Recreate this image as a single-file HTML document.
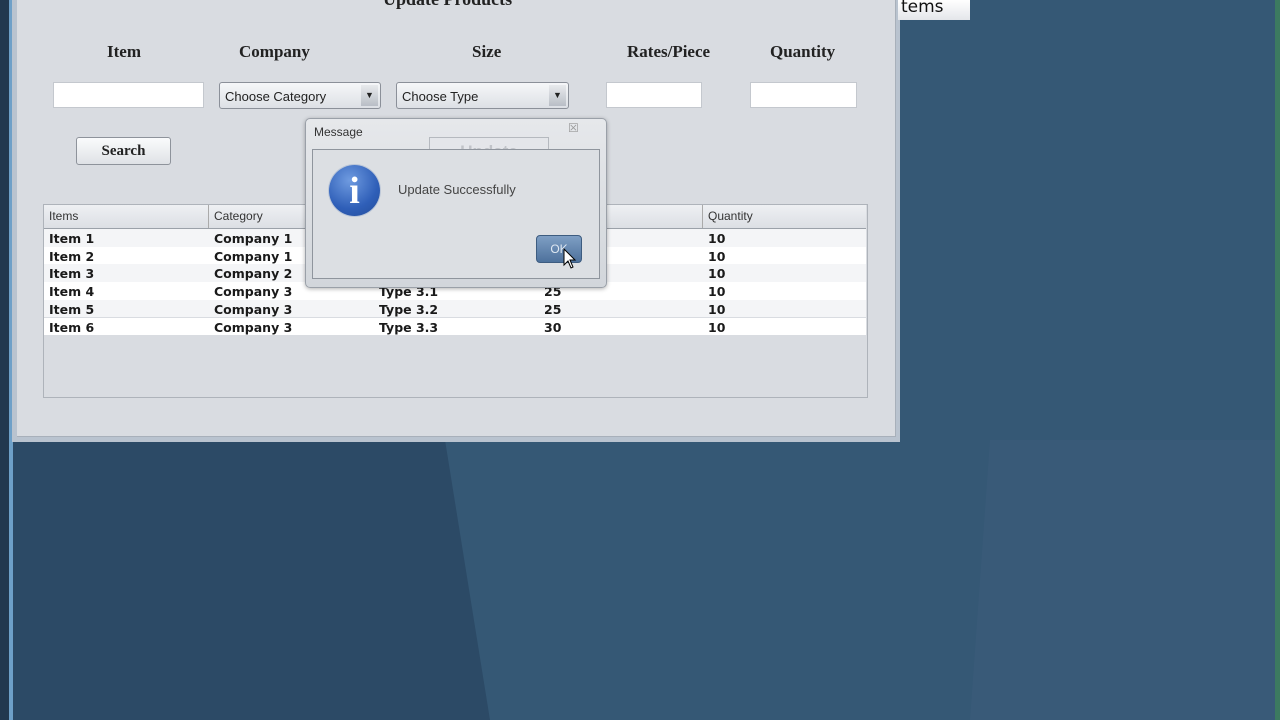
<!DOCTYPE html>
<html><head><style>
body{margin:0;width:1280px;height:720px;overflow:hidden;position:relative;font-family:"Liberation Sans",sans-serif;background:#355875}
.a{position:absolute}
.lbl{position:absolute;font-family:"Liberation Serif",serif;font-weight:bold;font-size:17px;color:#222;top:42px}
.tf{position:absolute;top:82px;height:26px;background:#fff;border:1px solid #c4c8ce;box-sizing:border-box}
.cb{position:absolute;top:82px;height:27px;border:1px solid #8b9099;border-radius:3px;background:linear-gradient(#f6f7f9,#dde0e5);box-sizing:border-box;font-size:13px;color:#222;padding:6px 5px}
.cb .ar{position:absolute;right:2px;top:2px;width:17px;height:21px;background:linear-gradient(#e8eaed,#b9bec6);font-size:9px;text-align:center;line-height:21px}
.row{position:absolute;left:44px;width:822px;height:17.7px;font-family:"DejaVu Sans",sans-serif;font-weight:bold;font-size:12.5px;color:#1a1a1a}
.row span{position:absolute;top:2px}
</style></head><body>
<svg class="a" style="left:0;top:0" width="1280" height="720">
<polygon points="0,440 445,440 490,720 0,720" fill="#2c4a66"/>
<polygon points="990,440 1280,440 1280,720 970,720" fill="#395a78"/>
<rect x="0" y="0" width="10" height="720" fill="#22384f"/>
<rect x="9" y="0" width="4" height="720" fill="#6ea0c8"/>
<rect x="1275" y="0" width="5" height="720" fill="#3c7a60"/>
</svg>
<div class="a" style="left:12px;top:0;width:888px;height:442px;background:#b9c3cf"></div>
<div class="a" style="left:17px;top:0;width:878px;height:436px;background:#d9dce1;border-right:1px solid #a8b0ba;border-bottom:1px solid #a8b0ba"></div>
<div class="a" style="left:383px;top:-11px;font-family:'Liberation Serif',serif;font-weight:bold;font-size:18px;color:#222">Update Products</div>
<div class="a" style="left:898px;top:0;width:72px;height:20px;background:linear-gradient(#fff,#e4e6ea)"></div>
<div class="a" style="left:901px;top:-3px;font-family:'DejaVu Sans',sans-serif;font-size:17px;color:#111">tems</div>
<div class="lbl" style="left:107px">Item</div>
<div class="lbl" style="left:239px">Company</div>
<div class="lbl" style="left:472px">Size</div>
<div class="lbl" style="left:627px">Rates/Piece</div>
<div class="lbl" style="left:770px">Quantity</div>
<div class="tf" style="left:53px;width:151px"></div>
<div class="cb" style="left:219px;width:162px">Choose Category<div class="ar">▼</div></div>
<div class="cb" style="left:396px;width:173px">Choose Type<div class="ar">▼</div></div>
<div class="tf" style="left:606px;width:96px"></div>
<div class="tf" style="left:750px;width:107px"></div>
<div class="a" style="left:76px;top:137px;width:95px;height:28px;box-sizing:border-box;border:1px solid #8e939b;border-radius:3px;background:linear-gradient(#fafbfc,#dfe2e6);font-family:'Liberation Serif',serif;font-weight:bold;font-size:15px;text-align:center;line-height:27px;color:#222">Search</div>
<div class="a" style="left:43px;top:204px;width:825px;height:194px;border:1px solid #aeb3ba;box-sizing:border-box;background:#d9dce1"></div>
<div class="a" style="left:44px;top:205px;width:822px;height:23px;background:linear-gradient(#eef0f3,#dcdfe4);border-bottom:1px solid #9ba1a9"></div>
<div class="a" style="left:49px;top:209px;font-size:12px;color:#333">Items</div>
<div class="a" style="left:208px;top:205px;width:1px;height:23px;background:#aaa"></div>
<div class="a" style="left:214px;top:209px;font-size:12px;color:#333">Category</div>
<div class="a" style="left:702px;top:205px;width:1px;height:23px;background:#aaa"></div>
<div class="a" style="left:585px;top:209px;font-size:12px;color:#333">ece</div>
<div class="a" style="left:708px;top:209px;font-size:12px;color:#333">Quantity</div>
<div class="row" style="top:229px;background:#f4f5f7"><span style="left:5px">Item 1</span><span style="left:170px">Company 1</span><span style="left:335px">Type 1.1</span><span style="left:500px">20</span><span style="left:664px">10</span></div>
<div class="row" style="top:246.7px;background:#fff"><span style="left:5px">Item 2</span><span style="left:170px">Company 1</span><span style="left:335px">Type 1.2</span><span style="left:500px">20</span><span style="left:664px">10</span></div>
<div class="row" style="top:264.4px;background:#f4f5f7"><span style="left:5px">Item 3</span><span style="left:170px">Company 2</span><span style="left:335px">Type 2.1</span><span style="left:500px">20</span><span style="left:664px">10</span></div>
<div class="row" style="top:282.1px;background:#fff"><span style="left:5px">Item 4</span><span style="left:170px">Company 3</span><span style="left:335px">Type 3.1</span><span style="left:500px">25</span><span style="left:664px">10</span></div>
<div class="row" style="top:299.8px;background:#f4f5f7"><span style="left:5px">Item 5</span><span style="left:170px">Company 3</span><span style="left:335px">Type 3.2</span><span style="left:500px">25</span><span style="left:664px">10</span></div>
<div class="row" style="top:317.5px;background:#fff"><span style="left:5px">Item 6</span><span style="left:170px">Company 3</span><span style="left:335px">Type 3.3</span><span style="left:500px">30</span><span style="left:664px">10</span></div>
<div class="a" style="left:305px;top:118px;width:302px;height:170px;box-sizing:border-box;border:1px solid #9aa0a8;border-radius:5px;background:linear-gradient(#e6e8eb,#d2d6db);box-shadow:0 1px 4px rgba(0,0,0,.3)"></div>
<div class="a" style="left:314px;top:125px;font-size:12px;color:#333">Message</div>
<div class="a" style="left:429px;top:137px;width:118px;height:13px;border:1px solid #b5b9bf;border-bottom:none;background:#e4e6ea;overflow:hidden;font-weight:bold;font-size:17px;color:#c0c3c8;text-align:center;line-height:28px">Update</div>
<div class="a" style="left:568px;top:121px;font-size:12px;color:#999">☒</div>
<div class="a" style="left:312px;top:149px;width:288px;height:130px;box-sizing:border-box;border:1px solid #8f959d;background:#dcdfe3"></div>
<div class="a" style="left:329px;top:165px;width:51px;height:51px;border-radius:50%;background:radial-gradient(circle at 40% 30%,#6f9be0,#2f5fb8 60%,#234c99);box-shadow:0 0 0 1px #bcc7d8"></div>
<div class="a" style="left:329px;top:170px;width:51px;text-align:center;font-family:'Liberation Serif',serif;font-weight:bold;font-size:38px;color:#fff;line-height:42px">i</div>
<div class="a" style="left:398px;top:182px;font-size:13px;color:#444">Update Successfully</div>
<div class="a" style="left:536px;top:235px;width:46px;height:28px;box-sizing:border-box;border:1px solid #3d5c80;border-radius:4px;background:linear-gradient(#7f9fc4,#4d719c);color:#dfe8f2;font-size:12px;text-align:center;line-height:26px">OK</div>
<svg class="a" style="left:563px;top:248px" width="14" height="22"><path d="M1 1 L1 17 L5 13 L8 20 L10 19 L7 12 L12 12 Z" fill="#fff" stroke="#000" stroke-width="1"/></svg>
</body></html>
